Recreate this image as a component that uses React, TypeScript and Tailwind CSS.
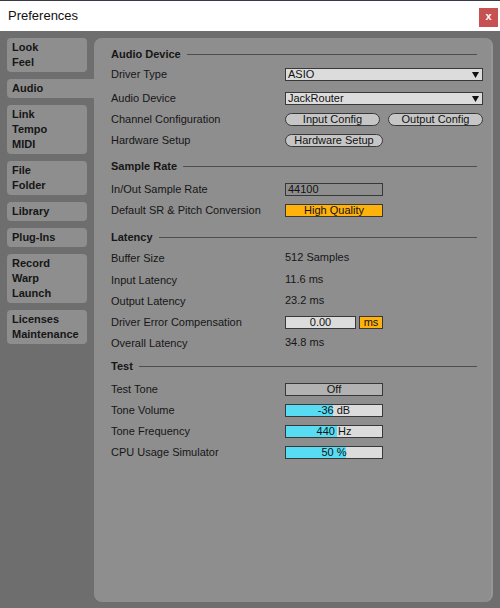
import React from 'react';

const FONT = { fontFamily: '"Liberation Sans", Arial, sans-serif' };

const tabs = [
  { lines: ['Look', 'Feel'] },
  { lines: ['Audio'], active: true },
  { lines: ['Link', 'Tempo', 'MIDI'] },
  { lines: ['File', 'Folder'] },
  { lines: ['Library'] },
  { lines: ['Plug-Ins'] },
  { lines: ['Record', 'Warp', 'Launch'] },
  { lines: ['Licenses', 'Maintenance'] },
];

function Header({ title, className = '' }: { title: string; className?: string }) {
  return (
    <div className={`flex items-center h-[20px] ${className}`}>
      <span className="font-bold text-[11px] text-[#161616]">{title}</span>
      <div className="flex-1 h-px bg-[#4e4e4e] ml-[6px] mr-[6px]" />
    </div>
  );
}

function Row({ label, children, className = '' }: { label: string; children?: React.ReactNode; className?: string }) {
  return (
    <div className={`flex items-center h-[21px] ${className}`}>
      <span className="w-[174px] shrink-0 text-[11px] text-[#161616]">{label}</span>
      <div className="flex items-center">{children}</div>
    </div>
  );
}

function Dropdown({ value }: { value: string }) {
  return (
    <div className="w-[198px] h-[13px] border border-[#383838] bg-[#dcdcdc] flex items-center justify-between pl-[2px] pr-[3px]">
      <span className="text-[11px] leading-none text-[#111]">{value}</span>
      <svg width="7" height="6" viewBox="0 0 7 6">
        <path d="M0 0 H7 L3.5 6 Z" fill="#111" />
      </svg>
    </div>
  );
}

function Pill({ label, w }: { label: string; w: string }) {
  return (
    <div className={`${w} h-[13px] rounded-full border border-[#383838] bg-[#c6c6c6] flex items-center justify-center`}>
      <span className="text-[11px] leading-none text-[#111]">{label}</span>
    </div>
  );
}

function Bar({ label, fill }: { label: string; fill: number }) {
  return (
    <div className="relative w-[98px] h-[13px] border border-[#383838] bg-[#dcdcdc] flex items-center justify-center">
      <div className="absolute left-0 top-0 bottom-0 bg-[#58dcf4]" style={{ width: `${fill}px` }} />
      <span className="relative text-[11px] leading-none text-[#111]">{label}</span>
    </div>
  );
}

export default function App() {
  return (
    <div className="w-[500px] h-[608px] flex flex-col bg-[#6e6e6e] overflow-hidden" style={FONT}>
      {/* title bar */}
      <div className="h-[31px] shrink-0 bg-white flex items-center justify-between relative">
        <div className="absolute top-0 left-0 right-0 h-[1px] bg-[#3a3a46]" />
        <span className="pl-[8px] text-[13px] text-[#111]">Preferences</span>
        <div className="w-[19px] h-[19px] mr-[2px] mt-[3px] bg-[#c75050] flex items-center justify-center">
          <span className="text-white text-[11px] font-bold leading-none -mt-[2px]">x</span>
        </div>
      </div>

      <div className="flex-1 flex pt-[7px] pl-[7px] pr-[7px] pb-[6px] gap-[7px]">
        {/* tabs */}
        <div className="w-[80px] shrink-0 flex flex-col gap-[7px]">
          {tabs.map((t, i) => (
            <div
              key={i}
              className={`bg-[#8e8e8e] py-[2px] pl-[5px] ${t.active ? 'rounded-l-[4px] -mr-[8px]' : 'rounded-[4px]'}`}
            >
              {t.lines.map((l) => (
                <div key={l} className="h-[15px] flex items-center text-[11px] font-bold text-[#161616]">
                  {l}
                </div>
              ))}
            </div>
          ))}
        </div>

        {/* panel */}
        <div className="flex-1 bg-[#8e8e8e] rounded-[8px] border-r-[2px] border-[#969696] pt-[6px] pl-[17px] pr-[8px]">
          <Header title="Audio Device" />
          <Row label="Driver Type">
            <Dropdown value="ASIO" />
          </Row>
          <Row label="Audio Device" className="mt-[3px]">
            <Dropdown value="JackRouter" />
          </Row>
          <Row label="Channel Configuration">
            <div className="flex gap-[8px]">
              <Pill label="Input Config" w="w-[95px]" />
              <Pill label="Output Config" w="w-[95px]" />
            </div>
          </Row>
          <Row label="Hardware Setup">
            <Pill label="Hardware Setup" w="w-[98px]" />
          </Row>

          <Header title="Sample Rate" className="mt-[5px]" />
          <Row label="In/Out Sample Rate" className="mt-[3px]">
            <div className="w-[98px] h-[13px] border border-[#383838] flex items-center pl-[2px]">
              <span className="text-[11px] leading-none text-[#111]">44100</span>
            </div>
          </Row>
          <Row label="Default SR & Pitch Conversion">
            <div className="w-[98px] h-[13px] border border-[#383838] bg-[#ffb20c] flex items-center justify-center">
              <span className="text-[11px] leading-none text-[#111]">High Quality</span>
            </div>
          </Row>

          <Header title="Latency" className="mt-[6px]" />
          <Row label="Buffer Size" className="mt-[1px]">
            <span className="text-[11px] text-[#161616] -mt-[2px]">512 Samples</span>
          </Row>
          <Row label="Input Latency" className="mt-[1px]">
            <span className="text-[11px] text-[#161616] -mt-[2px]">11.6 ms</span>
          </Row>
          <Row label="Output Latency">
            <span className="text-[11px] text-[#161616] -mt-[2px]">23.2 ms</span>
          </Row>
          <Row label="Driver Error Compensation">
            <div className="flex gap-[3px]">
              <div className="w-[71px] h-[13px] border border-[#383838] bg-[#dcdcdc] flex items-center justify-center">
                <span className="text-[11px] leading-none text-[#111]">0.00</span>
              </div>
              <div className="w-[24px] h-[13px] border border-[#383838] bg-[#ffb20c] flex items-center justify-center">
                <span className="text-[11px] leading-none text-[#111]">ms</span>
              </div>
            </div>
          </Row>
          <Row label="Overall Latency">
            <span className="text-[11px] text-[#161616] -mt-[2px]">34.8 ms</span>
          </Row>

          <Header title="Test" className="mt-[2px]" />
          <Row label="Test Tone" className="mt-[3px]">
            <div className="w-[98px] h-[13px] border border-[#383838] bg-[#b2b2b2] flex items-center justify-center">
              <span className="text-[11px] leading-none text-[#111]">Off</span>
            </div>
          </Row>
          <Row label="Tone Volume">
            <Bar label="-36 dB" fill={47} />
          </Row>
          <Row label="Tone Frequency">
            <Bar label="440 Hz" fill={51} />
          </Row>
          <Row label="CPU Usage Simulator">
            <Bar label="50 %" fill={60} />
          </Row>
        </div>
      </div>
    </div>
  );
}
